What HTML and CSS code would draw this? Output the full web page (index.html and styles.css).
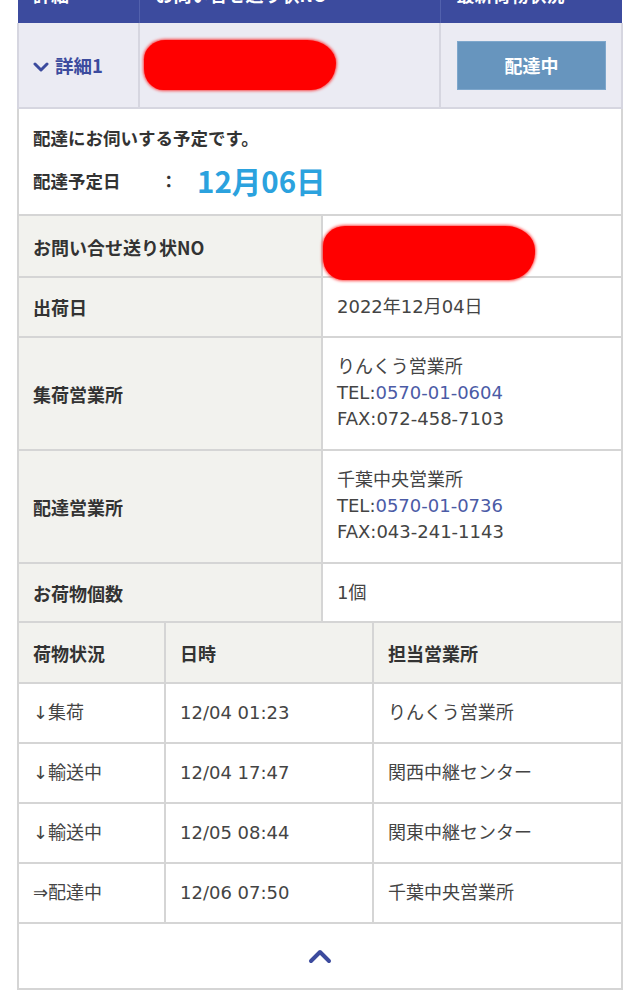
FILE: index.html
```html
<!DOCTYPE html>
<html lang="ja">
<head>
    <meta charset="UTF-8">
    <meta name="viewport" content="width=device-width, initial-scale=1.0">
    <title>お荷物問い合わせ結果</title>
    <link rel="stylesheet" href="styles.css">
</head>
<body>
    <div class="page">
        <table class="summary">
            <colgroup>
                <col class="col-detail">
                <col class="col-number">
                <col class="col-status">
            </colgroup>
            <thead>
                <tr>
                    <th>詳細</th>
                    <th>お問い合せ送り状NO</th>
                    <th>最新荷物状況</th>
                </tr>
            </thead>
            <tbody>
                <tr>
                    <td class="toggle">
                        <svg class="toggle-icon" width="16" height="10" viewBox="0 0 16 10">
                            <polyline points="2,2 8,8 14,2" fill="none" stroke="#3c4b9e" stroke-width="3" stroke-linecap="round" stroke-linejoin="round"/>
                        </svg>詳細1
                    </td>
                    <td><span class="redact redact-inline"></span></td>
                    <td><span class="status-btn">配達中</span></td>
                </tr>
            </tbody>
        </table>

        <div class="notice">
            <p class="notice-text">配達にお伺いする予定です。</p>
            <div class="notice-date">
                <span class="date-label">配達予定日</span>
                <span class="date-colon">：</span>
                <span class="date-value">12月06日</span>
            </div>
        </div>

        <table class="info">
            <colgroup>
                <col class="col-label">
                <col>
            </colgroup>
            <tr class="row-first">
                <th>お問い合せ送り状NO</th>
                <td class="redact-cell"><span class="redact redact-over"></span></td>
            </tr>
            <tr>
                <th>出荷日</th>
                <td>2022年12月04日</td>
            </tr>
            <tr class="row-multi">
                <th>集荷営業所</th>
                <td>
                    りんくう営業所<br>
                    TEL:<a href="tel:0570010604">0570-01-0604</a><br>
                    FAX:072-458-7103
                </td>
            </tr>
            <tr class="row-multi">
                <th>配達営業所</th>
                <td>
                    千葉中央営業所<br>
                    TEL:<a href="tel:0570010736">0570-01-0736</a><br>
                    FAX:043-241-1143
                </td>
            </tr>
            <tr class="row-last">
                <th>お荷物個数</th>
                <td>1個</td>
            </tr>
        </table>

        <table class="history">
            <colgroup>
                <col class="col-state">
                <col class="col-time">
                <col>
            </colgroup>
            <tr class="row-head">
                <th>荷物状況</th>
                <th>日時</th>
                <th>担当営業所</th>
            </tr>
            <tr>
                <td>↓集荷</td>
                <td>12/04 01:23</td>
                <td>りんくう営業所</td>
            </tr>
            <tr>
                <td>↓輸送中</td>
                <td>12/04 17:47</td>
                <td>関西中継センター</td>
            </tr>
            <tr>
                <td>↓輸送中</td>
                <td>12/05 08:44</td>
                <td>関東中継センター</td>
            </tr>
            <tr>
                <td>⇒配達中</td>
                <td>12/06 07:50</td>
                <td>千葉中央営業所</td>
            </tr>
        </table>

        <div class="collapse">
            <svg width="24" height="16" viewBox="0 0 24 16">
                <polyline points="3,13 12,4 21,13" fill="none" stroke="#3c4b9e" stroke-width="4" stroke-linecap="round" stroke-linejoin="round"/>
            </svg>
        </div>
    </div>
</body>
</html>
```

FILE: styles.css
```css
body {
    margin: 0;
    background-color: #ffffff;
    font-family: 'Noto Sans CJK JP', sans-serif;
    color: #333;
}

.page {
    width: 606px;
    margin: -20px 0 0 17px;
}

table {
    width: 100%;
    border-collapse: collapse;
    table-layout: fixed;
}

/* summary */

.col-detail {
    width: 121px;
}

.col-status {
    width: 182px;
}

.summary th {
    background-color: #3c4b9e;
    color: #ffffff;
    font-size: 18px;
    font-weight: bold;
    line-height: 20px;
    text-align: left;
    padding: 4px 16px 19px;
    border-left: 1px solid #5261ad;
    white-space: nowrap;
    overflow: hidden;
}

.summary th:first-child {
    border-left: none;
    padding-left: 15px;
}

.summary td {
    background-color: #ebebf3;
    border: 2px solid #d6d6e0;
    border-top: none;
    padding: 17px 16px;
    vertical-align: middle;
}

.summary td.toggle {
    padding-left: 14px;
    color: #3c4b9e;
    font-size: 18.5px;
    font-weight: bold;
    white-space: nowrap;
}

.toggle-icon {
    margin-right: 6px;
    vertical-align: 1px;
}

.redact {
    display: block;
    background-color: #ff0000;
    border-radius: 22px 30px 26px 20px / 20px 24px 28px 22px;
    box-shadow: 0 0 3px 1px rgba(255, 0, 0, 0.7);
}

.redact-inline {
    width: 192px;
    height: 50px;
    margin-left: -12px;
}

.redact-cell {
    position: relative;
}

.redact-over {
    position: absolute;
    left: 0;
    top: 10px;
    width: 212px;
    height: 54px;
}

.status-btn {
    display: block;
    height: 47px;
    line-height: 47px;
    margin-right: -1px;
    background-color: #6795be;
    border: 1px solid #7ea7cc;
    color: #ffffff;
    font-size: 18px;
    font-weight: bold;
    text-align: center;
}

/* notice */

.notice {
    border: 2px solid #d5d5d5;
    border-top: none;
    padding: 16px 14px 13px;
}

.notice-text {
    margin: 0;
    font-size: 17.5px;
    font-weight: bold;
    line-height: 26px;
}

.notice-date {
    display: flex;
    align-items: center;
    height: 42px;
    margin-top: 8px;
    font-weight: bold;
    font-size: 17.5px;
}

.date-label {
    width: 127px;
}

.date-colon {
    width: 17px;
    text-align: center;
}

.date-value {
    margin-left: 20px;
    color: #2ba2de;
    font-size: 29.5px;
}

/* info & history */

.info th,
.info td,
.history th,
.history td {
    border: 2px solid #d5d5d5;
    padding: 16px 14px;
    font-size: 18px;
    line-height: 26px;
    text-align: left;
    vertical-align: middle;
}

.info tr:first-child th,
.info tr:first-child td,
.history tr:first-child th {
    border-top: none;
}

.info .row-first th {
    padding-top: 18px;
}

.info .row-multi td {
    padding-bottom: 17px;
}

.info .row-last th,
.info .row-last td {
    padding-bottom: 15px;
}

.history .row-head th {
    padding-top: 17px;
}

.info th,
.history th {
    background-color: #f2f2ee;
    font-weight: bold;
}

.info td,
.history td {
    font-family: 'DejaVu Sans', 'Noto Sans CJK JP', sans-serif;
    font-weight: normal;
    color: #444;
}

.col-label {
    width: 304px;
}

.col-state {
    width: 147px;
}

.col-time {
    width: 208px;
}

.info a {
    color: #4b5ba6;
    text-decoration: none;
}

.collapse {
    display: flex;
    justify-content: center;
    align-items: center;
    height: 64px;
    border: 2px solid #d5d5d5;
    border-top: none;
}
```
